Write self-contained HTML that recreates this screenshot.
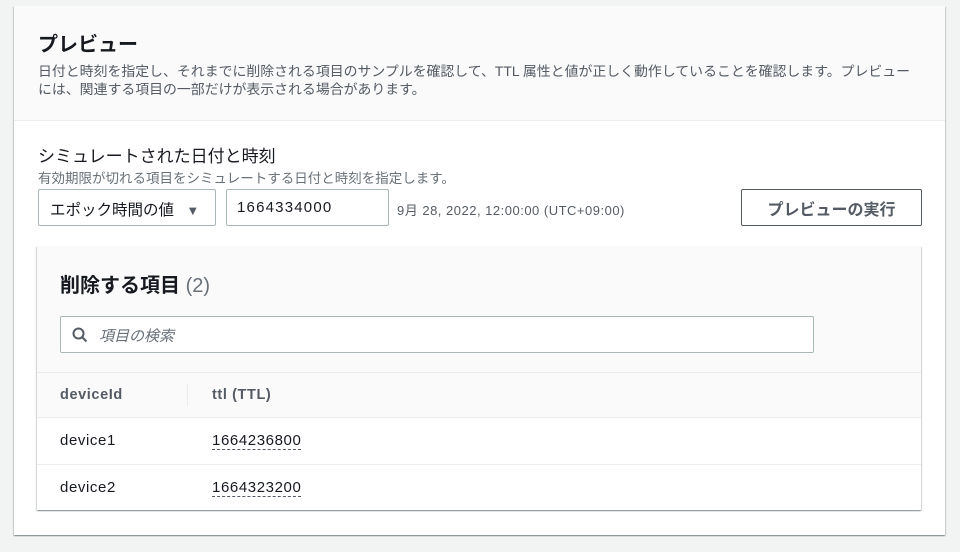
<!DOCTYPE html>
<html><head><meta charset="utf-8"><style>
*{box-sizing:border-box;margin:0;padding:0}
body{width:960px;height:552px;background:#f2f3f3;font-family:"Liberation Sans","Noto Sans CJK JP",sans-serif;color:#16191f;position:relative;overflow:hidden}
.card{position:absolute;left:14px;top:6px;width:931px;height:529px;background:#fff;box-shadow:0 1px 1px rgba(0,28,36,.3),1px 1px 1px rgba(0,28,36,.15),-1px 1px 1px rgba(0,28,36,.15)}
.hd{position:absolute;left:0;top:0;right:0;height:115px;background:#fafafa;border-bottom:1px solid #eaeded}
.abs{position:absolute;white-space:nowrap}
.box{position:absolute;border:1px solid #aab7b8;background:#fff;border-radius:2px}
.inner{position:absolute;left:23px;top:240px;width:884px;height:264px;background:#fafafa;box-shadow:0 1px 1px rgba(0,28,36,.3),1px 1px 1px rgba(0,28,36,.15),-1px 1px 1px rgba(0,28,36,.15)}
.row{position:absolute;left:0;right:0;background:#fff;border-top:1px solid #eaeded}
.dash{border-bottom:1px dashed #545b64}
.lat{letter-spacing:.6px}
</style></head><body>
<div class="card">
 <div class="hd">
  <div class="abs" style="left:24px;top:22px;font-size:20px;font-weight:bold">プレビュー</div>
  <div class="abs" style="left:24px;top:56px;font-size:13.9px;color:#545b64;line-height:18px">日付と時刻を指定し、それまでに削除される項目のサンプルを確認して、TTL 属性と値が正しく動作していることを確認します。プレビュー<br>には、関連する項目の一部だけが表示される場合があります。</div>
 </div>
 <div class="abs" style="left:24px;top:136px;font-size:17px">シミュレートされた日付と時刻</div>
 <div class="abs" style="left:24px;top:161px;font-size:13.5px;color:#687078">有効期限が切れる項目をシミュレートする日付と時刻を指定します。</div>
 <div class="box" style="left:24px;top:183px;width:178px;height:37px;font-size:15.5px;padding:8px 0 0 11px">エポック時間の値 <span style="font-size:13px;margin-left:8px;color:#545b64">▼</span></div>
 <div class="box" style="left:212px;top:183px;width:163px;height:37px;font-size:15px;padding:9px 0 0 10px"><span style="letter-spacing:1.2px">1664334000</span></div>
 <div class="abs" style="left:383px;top:194px;font-size:13px;color:#545b64;letter-spacing:.5px">9月 28, 2022, 12:00:00 (UTC+09:00)</div>
 <div class="box" style="left:727px;top:183px;width:181px;height:37px;border-color:#545b64;font-size:16px;font-weight:bold;color:#545b64;text-align:center;padding-top:6px">プレビューの実行</div>
 <div class="inner">
  <div class="abs" style="left:23px;top:23px;font-size:20px;font-weight:bold">削除する項目 <span style="font-weight:normal;color:#687078">(2)</span></div>
  <div class="box" style="left:23px;top:70px;width:754px;height:37px;border-color:#aab7b8">
   <svg class="abs" style="left:11px;top:10px" width="16" height="16" viewBox="0 0 16 16"><circle cx="6.5" cy="6.5" r="5" fill="none" stroke="#545b64" stroke-width="2"/><path d="M10 10l4.5 4.5" stroke="#545b64" stroke-width="2"/></svg>
   <div class="abs" style="left:38px;top:8px;font-size:15px;font-style:italic;color:#687078">項目の検索</div>
  </div>
  <div class="abs" style="left:0;right:0;top:126px;height:1px;background:#eaeded"></div>
  <div class="abs lat" style="left:23px;top:141px;font-size:14.5px;font-weight:bold;color:#545b64">deviceId</div>
  <div class="abs" style="left:150px;top:138px;width:1px;height:22px;background:#eaeded"></div>
  <div class="abs lat" style="left:175px;top:141px;font-size:14.5px;font-weight:bold;color:#545b64">ttl (TTL)</div>
  <div class="row" style="top:171px;height:47px"><div class="abs lat" style="left:23px;top:14px;font-size:15px">device1</div><div class="abs dash lat" style="left:175px;top:14px;font-size:15px">1664236800</div></div>
  <div class="row" style="top:218px;height:46px"><div class="abs lat" style="left:23px;top:14px;font-size:15px">device2</div><div class="abs dash lat" style="left:175px;top:14px;font-size:15px">1664323200</div></div>
 </div>
</div>
</body></html>
